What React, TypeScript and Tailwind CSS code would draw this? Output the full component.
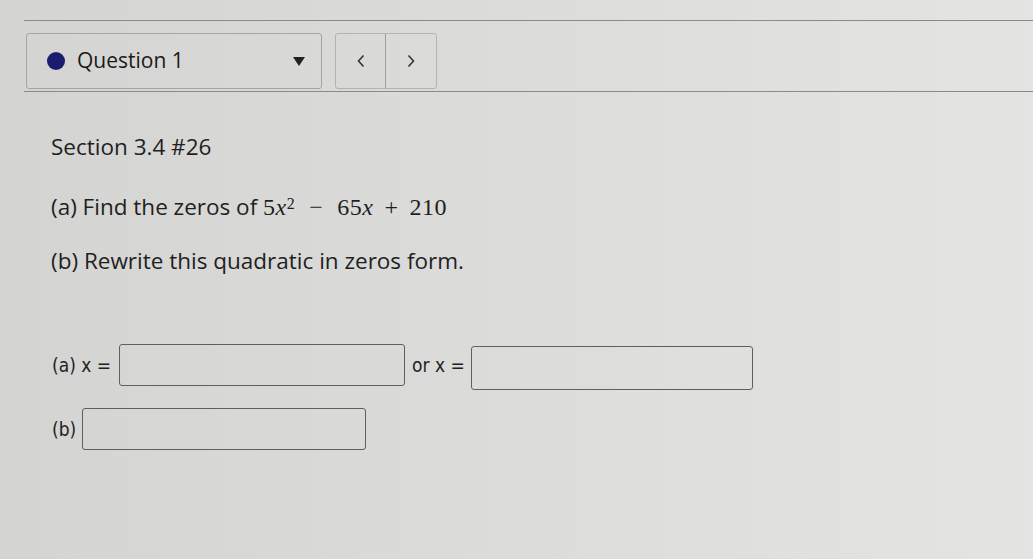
import React from 'react'

function Caret({ dir }: { dir: 'left' | 'right' }) {
  return (
    <svg width="12" height="16" viewBox="0 0 12 16" fill="none" stroke="#333" strokeWidth="1.6">
      {dir === 'left' ? <path d="M8.5 2.5 3.5 8l5 5.5" /> : <path d="M3.5 2.5 8.5 8l-5 5.5" />}
    </svg>
  )
}

export default function App() {
  return (
    <div className="w-[1033px] h-[559px] overflow-hidden bg-gradient-to-r from-[#d4d4d2] via-[#dcdcda] to-[#e4e4e2] text-[#1f1f1f] font-['Open_Sans',sans-serif]">
      {/* question nav bar */}
      <div className="mt-[20px] ml-[24px] border-t border-b border-[#8a8a88] h-[72px] flex items-end pb-[2px] gap-[13px] pl-[2px]">
        <div className="w-[296px] h-[56px] border border-[#a5a5a3] rounded-[3px] flex items-center px-[20px]">
          <span className="w-[18px] h-[18px] rounded-full bg-[#1c1c6e] shrink-0" />
          <span className="ml-[12px] text-[21px] text-[#1a1a1a]">Question 1</span>
          <svg className="ml-auto mr-[-4px]" width="12" height="9" viewBox="0 0 12 9">
            <path d="M0 0h12L6 9z" fill="#222" />
          </svg>
        </div>
        <div className="flex h-[56px] border border-[#b3b3b1] rounded-[3px]">
          <div className="w-[50px] flex items-center justify-center border-r border-[#9d9d9b]">
            <Caret dir="left" />
          </div>
          <div className="w-[50px] flex items-center justify-center">
            <Caret dir="right" />
          </div>
        </div>
      </div>

      {/* problem text */}
      <div className="pl-[51px] pt-[40px] text-[22.5px] leading-[30px]">
        <p>Section 3.4 #26</p>
        <p className="mt-[30px] flex items-baseline">
          (a) Find the zeros of&nbsp;
          <span className="font-['Liberation_Serif',serif] text-[24px] tracking-[0.5px]">
            5<i>x</i>
            <sup className="text-[16px] relative top-[-6px]">2</sup>
            <span className="mx-[14px]">−</span>65<i>x</i>
            <span className="mx-[11px]">+</span>210
          </span>
        </p>
        <p className="mt-[24px]">(b) Rewrite this quadratic in zeros form.</p>
      </div>

      {/* answers */}
      <div className="pl-[52px] pt-[64px] font-['DejaVu_Sans_Condensed','DejaVu_Sans',sans-serif] text-[19px] text-[#222]">
        <div className="flex items-center">
          <span>(a) x =</span>
          <div className="ml-[8px] w-[286px] h-[42px] border border-[#5f5f5d] rounded-[3px]" />
          <span className="ml-[7px]">or x =</span>
          <div className="ml-[6px] mt-[6px] w-[282px] h-[44px] border border-[#5f5f5d] rounded-[3px]" />
        </div>
        <div className="flex items-center mt-[18px]">
          <span>(b)</span>
          <div className="ml-[6px] w-[284px] h-[42px] border border-[#5f5f5d] rounded-[3px]" />
        </div>
      </div>
    </div>
  )
}
